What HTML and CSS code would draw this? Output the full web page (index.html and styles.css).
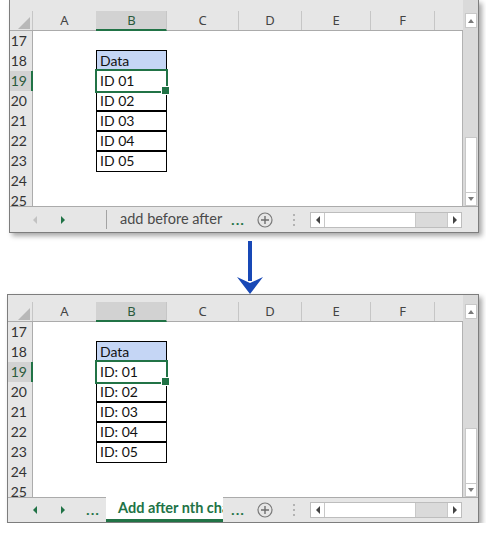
FILE: index.html
```html
<!DOCTYPE html>
<html lang="en">

<head>
    <meta charset="UTF-8">
    <meta name="viewport" content="width=device-width, initial-scale=1.0">
    <title>Add after nth character</title>
    <link rel="stylesheet" href="styles.css">
</head>

<body>
    <!-- workbook before: plain ids -->
    <div class="book book-before">
        <div class="sheet">
            <div class="grid">
                <div class="heads">
                    <div class="corner"><span class="corner-mark"></span></div>
                    <div class="head">A</div>
                    <div class="head head-sel">B</div>
                    <div class="head">C</div>
                    <div class="head">D</div>
                    <div class="head">E</div>
                    <div class="head">F</div>
                    <div class="head head-rest"></div>
                </div>
                <div class="body">
                    <div class="row"><div class="num">17</div></div>
                    <div class="row"><div class="num">18</div><div class="cell cell-head">Data</div></div>
                    <div class="row"><div class="num num-sel">19</div><div class="cell cell-sel">ID 01</div></div>
                    <div class="row"><div class="num">20</div><div class="cell">ID 02</div></div>
                    <div class="row"><div class="num">21</div><div class="cell">ID 03</div></div>
                    <div class="row"><div class="num">22</div><div class="cell">ID 04</div></div>
                    <div class="row"><div class="num">23</div><div class="cell">ID 05</div></div>
                    <div class="row"><div class="num">24</div></div>
                    <div class="row"><div class="num">25</div></div>
                </div>
            </div>
            <div class="vscroll">
                <div class="vs-btn"><span class="tri-up"></span></div>
                <div class="vs-track"></div>
                <div class="vs-thumb"></div>
                <div class="vs-btn"><span class="tri-down"></span></div>
            </div>
        </div>
        <div class="tabbar">
            <div class="tab-nav">
                <span class="tri-left tri-off"></span>
                <span class="tri-right"></span>
            </div>
            <div class="tab-sep"></div>
            <div class="tab">add before after char</div>
            <div class="tab-more">...</div>
            <div class="tab-add">
                <svg width="16" height="16" viewBox="0 0 16 16">
                    <circle cx="8" cy="8" r="7" fill="none" stroke="#7a7a7a" stroke-width="1.2"/>
                    <path d="M8 4v8M4 8h8" stroke="#6e6e6e" stroke-width="1.4"/>
                </svg>
            </div>
            <div class="tab-grip">
                <svg width="2" height="12" viewBox="0 0 2 12">
                    <rect x="0" y="0" width="2" height="2" fill="#b3b3b3"/>
                    <rect x="0" y="5" width="2" height="2" fill="#b3b3b3"/>
                    <rect x="0" y="10" width="2" height="2" fill="#b3b3b3"/>
                </svg>
            </div>
            <div class="hscroll">
                <div class="hs-btn"><span class="tri-left tri-small"></span></div>
                <div class="hs-thumb"></div>
                <div class="hs-track"></div>
                <div class="hs-btn hs-btn-end"><span class="tri-right tri-small"></span></div>
            </div>
        </div>
    </div>

    <div class="arrow">
        <svg width="28" height="61" viewBox="0 0 28 61">
            <rect x="12" y="8" width="4" height="40" fill="#1848b6"/>
            <path d="M1 44 L14 50 L27 44 L14 61 Z" fill="#1848b6"/>
        </svg>
    </div>

    <!-- workbook after: colon added after the 2nd character -->
    <div class="book book-after">
        <div class="sheet">
            <div class="grid">
                <div class="heads">
                    <div class="corner"><span class="corner-mark"></span></div>
                    <div class="head">A</div>
                    <div class="head head-sel">B</div>
                    <div class="head">C</div>
                    <div class="head">D</div>
                    <div class="head">E</div>
                    <div class="head">F</div>
                    <div class="head head-rest"></div>
                </div>
                <div class="body">
                    <div class="row"><div class="num">17</div></div>
                    <div class="row"><div class="num">18</div><div class="cell cell-head">Data</div></div>
                    <div class="row"><div class="num num-sel">19</div><div class="cell cell-sel">ID: 01</div></div>
                    <div class="row"><div class="num">20</div><div class="cell">ID: 02</div></div>
                    <div class="row"><div class="num">21</div><div class="cell">ID: 03</div></div>
                    <div class="row"><div class="num">22</div><div class="cell">ID: 04</div></div>
                    <div class="row"><div class="num">23</div><div class="cell">ID: 05</div></div>
                    <div class="row"><div class="num">24</div></div>
                    <div class="row"><div class="num">25</div></div>
                </div>
            </div>
            <div class="vscroll">
                <div class="vs-btn"><span class="tri-up"></span></div>
                <div class="vs-track"></div>
                <div class="vs-thumb"></div>
                <div class="vs-btn"><span class="tri-down"></span></div>
            </div>
        </div>
        <div class="tabbar">
            <div class="tab-nav">
                <span class="tri-left"></span>
                <span class="tri-right"></span>
                <span class="nav-more">...</span>
            </div>
            <div class="tab tab-active">Add after nth character</div>
            <div class="tab-more">...</div>
            <div class="tab-add">
                <svg width="16" height="16" viewBox="0 0 16 16">
                    <circle cx="8" cy="8" r="7" fill="none" stroke="#7a7a7a" stroke-width="1.2"/>
                    <path d="M8 4v8M4 8h8" stroke="#6e6e6e" stroke-width="1.4"/>
                </svg>
            </div>
            <div class="tab-grip">
                <svg width="2" height="12" viewBox="0 0 2 12">
                    <rect x="0" y="0" width="2" height="2" fill="#b3b3b3"/>
                    <rect x="0" y="5" width="2" height="2" fill="#b3b3b3"/>
                    <rect x="0" y="10" width="2" height="2" fill="#b3b3b3"/>
                </svg>
            </div>
            <div class="hscroll">
                <div class="hs-btn"><span class="tri-left tri-small"></span></div>
                <div class="hs-thumb"></div>
                <div class="hs-track"></div>
                <div class="hs-btn hs-btn-end"><span class="tri-right tri-small"></span></div>
            </div>
        </div>
    </div>
</body>

</html>
```

FILE: styles.css
```css
* {
    box-sizing: border-box;
}

body {
    margin: 0;
    background: #fff;
    font-family: Lato, "Liberation Sans", sans-serif;
}

/* window frame */
.book {
    border: 1px solid #7d7d7d;
    background: #e6e6e6;
    box-shadow: 3px 3px 5px rgba(0, 0, 0, 0.35);
}

.book-before {
    width: 470px;
    margin-left: 9px;
    border-top: none;
    --gap: 11px;
    --rh: 23px;
    --nav: 96px;
    --navpad: 23px;
    --tabh: 26px;
}

.book-after {
    width: 472px;
    margin-left: 7px;
    --gap: 7px;
    --rh: 25px;
    --nav: 98px;
    --navpad: 25px;
    --tabh: 25px;
}

.sheet {
    display: flex;
}

.grid {
    flex: 1;
}

.heads,
.row {
    display: grid;
    grid-template-columns: var(--rh) 64px 70px 72px 63px 69px 64px 1fr;
}

/* column headers */
.heads {
    padding-top: var(--gap);
    border-bottom: 1px solid #ababab;
}

.corner,
.head {
    height: 19px;
    border-right: 1px solid #c6c6c6;
}

.corner {
    display: flex;
    justify-content: flex-end;
    align-items: flex-end;
    padding: 0 2px 1px 0;
}

.corner-mark {
    width: 0;
    height: 0;
    border-left: 12px solid transparent;
    border-bottom: 12px solid #b8b8b8;
}

.head {
    font: 13px "Noto Sans", sans-serif;
    color: #444;
    text-align: center;
    line-height: 19px;
}

.head-rest {
    border-right: none;
}

.head-sel {
    height: 20px;
    margin: 0 0 -1px -1px;
    padding-left: 1px;
    background: #d2d2d2;
    border-bottom: 2px solid #217346;
    color: #2b5a3c;
}

/* rows */
.body {
    height: 175px;
    overflow: hidden;
    background: #fff;
    border-right: 1px solid #b2b2b2;
}

.row {
    height: 20px;
}

.num {
    background: #e6e6e6;
    border-right: 1px solid #acacac;
    border-bottom: 1px solid #cdcdcd;
    font-size: 14px;
    line-height: 20px;
    color: #333;
    text-align: right;
    padding-right: 5px;
}

.num-sel {
    background: #d2d2d2;
    border-right: 2px solid #217346;
    padding-right: 4px;
    color: #2b5a3c;
}

.cell {
    grid-column: 3;
    margin: -1px 0 0 -1px;
    border: 1px solid #000;
    padding-left: 3px;
    font-size: 14px;
    line-height: 20px;
    color: #111;
    white-space: nowrap;
}

.cell-head {
    background: #c5d6f5;
}

.cell-sel {
    position: relative;
    z-index: 1;
    margin: -2px -1px -1px -2px;
    border: 2px solid #217346;
    background: #fff;
}

.cell-sel::after {
    content: "";
    position: absolute;
    right: -4px;
    bottom: -4px;
    width: 7px;
    height: 7px;
    background: #217346;
    border: 1px solid #fff;
}

/* vertical scrollbar */
.vscroll {
    width: 15px;
    display: flex;
    flex-direction: column;
    align-items: flex-end;
    padding: calc(var(--gap) + 2px) 1px 0 0;
    background: #dadada;
}

.vs-btn {
    width: 12px;
    height: 15px;
    display: flex;
    align-items: center;
    justify-content: center;
    background: #fff;
    border: 1px solid #c8c8c8;
}

.vs-track {
    flex: 1;
}

.vs-thumb {
    width: 12px;
    height: 55px;
    background: #fff;
    border: 1px solid #c8c8c8;
    border-bottom: none;
}

.vscroll .vs-btn:last-child {
    height: 14px;
}

.tri-up,
.tri-down {
    width: 0;
    height: 0;
    border-left: 3px solid transparent;
    border-right: 3px solid transparent;
}

.tri-up {
    border-bottom: 4px solid #7a7a7a;
}

.tri-down {
    border-top: 4px solid #7a7a7a;
}

.tri-left,
.tri-right {
    width: 0;
    height: 0;
    border-top: 4px solid transparent;
    border-bottom: 4px solid transparent;
}

.tri-left {
    border-right: 4px solid #217346;
}

.tri-right {
    border-left: 4px solid #217346;
}

.tri-off {
    border-right-color: #c2c2c2;
}

.tri-small.tri-left {
    border-right-color: #444;
}

.tri-small.tri-right {
    border-left-color: #444;
}

/* sheet tabs */
.tabbar {
    display: flex;
    align-items: center;
    height: var(--tabh);
    border-top: 1px solid #ababab;
}

.tab-nav {
    width: var(--nav);
    flex: none;
    display: flex;
    align-items: center;
    gap: 24px;
    padding-left: var(--navpad);
}

.nav-more {
    margin-left: -3px;
    color: #217346;
    font: bold 13px "Noto Sans", sans-serif;
    letter-spacing: 1px;
}

.tab-sep {
    width: 1px;
    height: 19px;
    background: #a3a3a3;
}

.tab {
    width: 116px;
    flex: none;
    align-self: stretch;
    padding: 0 2px 0 13px;
    overflow: hidden;
    white-space: nowrap;
    font-size: 14.5px;
    line-height: calc(var(--tabh) - 2px);
    color: #4a4a4a;
}

.tab-active {
    width: 117px;
    margin-top: -1px;
    padding: 0 0 0 12px;
    background: #fff;
    border-bottom: 3px solid #217346;
    font-weight: bold;
    line-height: 22px;
    color: #217346;
}

.tab-more {
    width: 30px;
    flex: none;
    text-align: center;
    color: #217346;
    font: bold 13px "Noto Sans", sans-serif;
    letter-spacing: 1px;
}

.tab-add {
    width: 24px;
    flex: none;
    display: flex;
    justify-content: center;
}

.tab-grip {
    width: 33px;
    flex: none;
    display: flex;
    justify-content: center;
}

.tab-add svg,
.tab-grip svg {
    display: block;
}

/* horizontal scrollbar */
.hscroll {
    width: 152px;
    height: 16px;
    flex: none;
    display: flex;
    border: 1px solid #bdbdbd;
}

.hs-btn {
    width: 14px;
    display: flex;
    align-items: center;
    justify-content: center;
    background: #fff;
    border-right: 1px solid #c8c8c8;
}

.hs-btn-end {
    border-right: none;
    border-left: 1px solid #c8c8c8;
}

.hs-thumb {
    width: 91px;
    background: #fff;
    border-right: 1px solid #c8c8c8;
}

.hs-track {
    flex: 1;
    background: #dadada;
}

.arrow {
    height: 61px;
    padding-left: 236px;
}

.arrow svg {
    display: block;
}
```
